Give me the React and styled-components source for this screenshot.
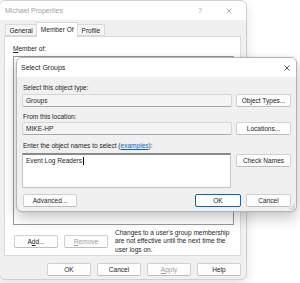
import React from "react";
import styled, { createGlobalStyle } from "styled-components";

const Global = createGlobalStyle`
  html, body { margin: 0; padding: 0; background: #ffffff; overflow: hidden; }
  * { box-sizing: border-box; }
`;

const FONT = `"Liberation Sans", Arial, sans-serif`;

const Desktop = styled.div`
  position: relative;
  width: 300px;
  height: 283px;
  overflow: hidden;
  background: #ffffff;
  font-family: ${FONT};
  font-size: 6.55px;
  color: #262626;
`;

const Window = styled.div`
  position: absolute;
  left: ${(p) => p.$x}px;
  top: ${(p) => p.$y}px;
  width: ${(p) => p.$w}px;
  height: ${(p) => p.$h}px;
  border: 1px solid ${(p) => (p.$active ? "#b4b4b4" : "#cfcfcf")};
  border-radius: 6px;
  background: #f0f0f0;
  display: flex;
  flex-direction: column;
  overflow: hidden;
  box-shadow: ${(p) =>
    p.$active
      ? "0 6px 14px rgba(0,0,0,0.22), 0 0 3px rgba(0,0,0,0.08)"
      : "0 4px 12px rgba(0,0,0,0.12)"};
`;

const TitleBar = styled.div`
  height: 19px;
  flex: none;
  background: #ffffff;
  display: flex;
  align-items: center;
  padding-left: ${(p) => p.$pad}px;
  font-size: 7px;
  color: ${(p) => (p.$active ? "#1b1b1b" : "#a3a3a3")};
`;

const TitleText = styled.span`
  flex: 1;
  white-space: nowrap;
`;

const TitleButton = styled.span`
  width: ${(p) => p.$w}px;
  margin-right: ${(p) => p.$mr || 0}px;
  display: flex;
  justify-content: center;
  align-items: center;
  color: inherit;
  font-size: 7px;
`;

const Body = styled.div`
  padding: ${(p) => p.$pad};
  display: flex;
  flex-direction: column;
`;

const TabStrip = styled.div`
  height: 16px;
  display: flex;
  align-items: flex-end;
  padding-left: 1px;
  position: relative;
  z-index: 1;
`;

const Tab = styled.div`
  height: ${(p) => (p.$selected ? 15 : 12)}px;
  margin-bottom: ${(p) => (p.$selected ? -1 : 0)}px;
  padding: 0 3.5px;
  display: flex;
  align-items: center;
  justify-content: center;
  white-space: nowrap;
  background: ${(p) => (p.$selected ? "#ffffff" : "#f5f5f5")};
  border: 1px solid #d9d9d9;
  border-bottom: ${(p) => (p.$selected ? "none" : "1px solid #d9d9d9")};
  border-left: ${(p) => (p.$first || p.$selected ? "1px solid #d9d9d9" : "none")};
  border-right: ${(p) => (p.$beforeSelected ? "none" : "1px solid #d9d9d9")};
  padding-bottom: ${(p) => (p.$selected ? 2 : 0)}px;
`;

const Panel = styled.div`
  height: 220px;
  background: #ffffff;
  border: 1px solid #d9d9d9;
  padding: 7px 6px 0 8px;
  display: flex;
  flex-direction: column;
`;

const Label = styled.div`
  line-height: 9px;
  height: 9px;
  white-space: nowrap;
  padding-left: ${(p) => p.$pl || 0}px;
  margin-top: ${(p) => p.$mt || 0}px;
  margin-bottom: ${(p) => p.$mb || 0}px;
`;

const ListBox = styled.div`
  margin-top: 3px;
  height: 169px;
  background: #ffffff;
  border: 1px solid #9a9a9a;
`;

const ActionRow = styled.div`
  margin-top: 4px;
  height: 25px;
  display: flex;
  align-items: center;
  padding-left: 1px;
`;

const Button = styled.div`
  width: ${(p) => p.$w}px;
  height: 13px;
  flex: none;
  display: flex;
  align-items: center;
  justify-content: center;
  white-space: nowrap;
  background: #fdfdfd;
  border: 1px solid ${(p) => (p.$default ? "#0067c0" : "#d0d0d0")};
  border-bottom-color: ${(p) => (p.$default ? "#0067c0" : "#bdbdbd")};
  border-radius: 2px;
  color: ${(p) => (p.$disabled ? "#a0a0a0" : "#262626")};
  margin-left: ${(p) => p.$ml || 0}px;
  margin-top: ${(p) => p.$mt || 0}px;
`;

const Note = styled.div`
  margin-left: 7px;
  line-height: 8.4px;
  white-space: nowrap;
`;

const Footer = styled.div`
  margin-top: 7px;
  display: flex;
  justify-content: flex-end;
  gap: 6px;
`;

const U = styled.span`
  text-decoration: underline;
  text-underline-offset: 1px;
`;

const Link = styled.span`
  color: #0066cc;
  text-decoration: underline;
  text-underline-offset: 1px;
`;

const FieldRow = styled.div`
  display: grid;
  grid-template-columns: 1fr 55px;
  column-gap: 4px;
  align-items: start;
`;

const Field = styled.div`
  height: 13px;
  display: flex;
  align-items: center;
  padding-left: 3px;
  background: #f4f4f4;
  border: 1px solid #d6d6d6;
  border-bottom-color: #a8a8a8;
  border-radius: 2px;
  white-space: nowrap;
`;

const TextArea = styled.div`
  height: 35px;
  margin-right: 1px;
  background: #ffffff;
  border: 1px solid #c4c4c4;
  border-top: 2px solid #8a8a8a;
  padding: 1px 3px;
  line-height: 9px;
  white-space: nowrap;
  display: flex;
  align-items: flex-start;
`;

const Caret = styled.span`
  display: inline-block;
  width: 1px;
  height: 8px;
  margin-top: 0.5px;
  margin-left: 0.5px;
  background: #000000;
`;

const DialogFooter = styled.div`
  margin-top: 6px;
  display: flex;
  align-items: center;
  padding-left: 1px;
`;

const Spacer = styled.div`
  flex: 1;
`;

const Grip = styled.svg`
  position: absolute;
  right: 1px;
  bottom: 1px;
`;

const CloseIcon = ({ color, size = 6 }) => (
  <svg width={size} height={size} viewBox="0 0 6 6">
    <path d="M0.5 0.5 L5.5 5.5 M5.5 0.5 L0.5 5.5" stroke={color} strokeWidth="0.8" fill="none" />
  </svg>
);

export default function App() {
  return (
    <>
      <Global />
      <Desktop>
        <Window $x={-1} $y={0} $w={248} $h={280}>
          <TitleBar $pad={5}>
            <TitleText>Michael Properties</TitleText>
            <TitleButton $w={12} $mr={14}>?</TitleButton>
            <TitleButton $w={17} $mr={9}>
              <CloseIcon color="#a8a8a8" />
            </TitleButton>
          </TitleBar>
          <Body $pad="0 5px 0 4px">
            <TabStrip>
              <Tab $first $beforeSelected>General</Tab>
              <Tab $selected>Member Of</Tab>
              <Tab>Profile</Tab>
            </TabStrip>
            <Panel>
              <Label>
                <U>M</U>ember of:
              </Label>
              <ListBox />
              <ActionRow>
                <Button $w={44}>
                  A<U>d</U>d...
                </Button>
                <Button $w={44} $ml={6} $disabled>
                  <U>R</U>emove
                </Button>
                <Note>
                  Changes to a user's group membership
                  <br />
                  are not effective until the next time the
                  <br />
                  user logs on.
                </Note>
              </ActionRow>
            </Panel>
            <Footer>
              <Button $w={44}>OK</Button>
              <Button $w={44}>Cancel</Button>
              <Button $w={44} $disabled>
                <U>A</U>pply
              </Button>
              <Button $w={44}>Help</Button>
            </Footer>
          </Body>
        </Window>

        <Window $active $x={16} $y={57} $w={281} $h={155}>
          <TitleBar $active $pad={4}>
            <TitleText>Select Groups</TitleText>
            <TitleButton $w={14} $mr={2}>
              <CloseIcon color="#333333" />
            </TitleButton>
          </TitleBar>
          <Body $pad="6px 5px 4px 5px">
            <Label $mb={2} $pl={1}>Select this object type:</Label>
            <FieldRow>
              <Field>Groups</Field>
              <Button $w={55}>Object Types...</Button>
            </FieldRow>
            <Label $mt={5} $mb={1} $pl={1}>From this location:</Label>
            <FieldRow>
              <Field>MIKE-HP</Field>
              <Button $w={55}>Locations...</Button>
            </FieldRow>
            <Label $mt={6} $mb={3} $pl={1}>
              Enter the object names to select (<Link>examples</Link>):
            </Label>
            <FieldRow>
              <TextArea>
                Event Log Readers
                <Caret />
              </TextArea>
              <Button $w={55} $mt={1}>Check Names</Button>
            </FieldRow>
            <DialogFooter>
              <Button $w={54}>Advanced...</Button>
              <Spacer />
              <Button $w={46} $default>OK</Button>
              <Button $w={45} $ml={5}>Cancel</Button>
            </DialogFooter>
          </Body>
          <Grip width="6" height="6" viewBox="0 0 6 6">
            <rect x="4.5" y="0.5" width="1" height="1" fill="#9a9a9a" />
            <rect x="2.5" y="2.5" width="1" height="1" fill="#9a9a9a" />
            <rect x="4.5" y="2.5" width="1" height="1" fill="#9a9a9a" />
            <rect x="0.5" y="4.5" width="1" height="1" fill="#9a9a9a" />
            <rect x="2.5" y="4.5" width="1" height="1" fill="#9a9a9a" />
            <rect x="4.5" y="4.5" width="1" height="1" fill="#9a9a9a" />
          </Grip>
        </Window>
      </Desktop>
    </>
  );
}
